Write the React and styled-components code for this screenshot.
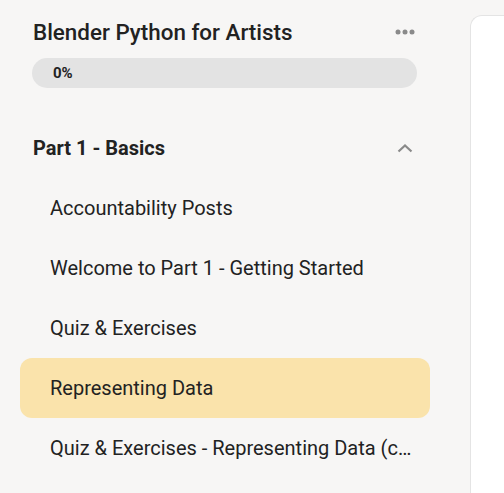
import React from "react";
import styled, { createGlobalStyle } from "styled-components";

const Global = createGlobalStyle`
  html, body { margin: 0; padding: 0; background: #f7f6f5; }
  body { font-family: Roboto, "Noto Sans", sans-serif; color: #222; }
  #root { height: 493px; overflow: hidden; }
`;

const Page = styled.div`
  display: flex;
  height: 493px;
  background: #f7f6f5;
`;

const Sidebar = styled.aside`
  width: 470px;
  flex: none;
  padding: 0 40px 0 20px;
  box-sizing: border-box;
`;

const Header = styled.div`
  display: flex;
  align-items: center;
  justify-content: space-between;
  padding: 16px 0 0 13px;
  height: 32px;
  box-sizing: content-box;
`;

const Title = styled.h1`
  margin: 0;
  font-size: 22.4px;
  font-weight: 500;
  color: #222;
`;

const IconButton = styled.button`
  border: 0;
  background: none;
  padding: 0;
  width: 24px;
  height: 24px;
  display: flex;
  align-items: center;
  justify-content: center;
  margin-right: 13px;
  cursor: pointer;
`;

const Progress = styled.div`
  margin: 10px 13px 0 12px;
  height: 30px;
  border-radius: 15px;
  background: #e3e3e3;
  display: flex;
  align-items: center;
  padding-left: 21px;
  font-size: 15px;
  font-weight: 700;
  color: #222;
`;

const Section = styled.div`
  display: flex;
  align-items: center;
  justify-content: space-between;
  margin-top: 45px;
  height: 30px;
  padding-left: 13px;
`;

const SectionTitle = styled.h2`
  margin: 0;
  font-size: 20px;
  font-weight: 700;
  color: #222;
`;

const List = styled.ul`
  list-style: none;
  margin: 15px 0 0;
  padding: 0;
`;

const Item = styled.li`
  height: 60px;
  display: flex;
  align-items: center;
  padding: 0 12px 0 30px;
  border-radius: 12px;
  background: ${(p) => (p.$active ? "#fae3ab" : "transparent")};
  font-size: 20px;
  color: #222;
  min-width: 0;
`;

const ItemText = styled.span`
  white-space: nowrap;
  overflow: hidden;
  text-overflow: ellipsis;
`;

const Main = styled.main`
  flex: 1;
  margin-top: 15px;
  background: #fff;
  border-left: 1px solid #e4e4e4;
  border-top: 1px solid #e4e4e4;
  border-top-left-radius: 12px;
`;

const Dots = () => (
  <svg width="20" height="6" viewBox="0 0 20 6">
    <circle cx="3" cy="3" r="2.5" fill="#8a8a8a" />
    <circle cx="10" cy="3" r="2.5" fill="#8a8a8a" />
    <circle cx="17" cy="3" r="2.5" fill="#8a8a8a" />
  </svg>
);

const Chevron = () => (
  <svg width="16" height="10" viewBox="0 0 16 10">
    <path d="M1.5 8.5 L8 2.5 L14.5 8.5" fill="none" stroke="#8a8a8a" strokeWidth="2.2" />
  </svg>
);

const items = [
  "Accountability Posts",
  "Welcome to Part 1 - Getting Started",
  "Quiz & Exercises",
  "Representing Data",
  "Quiz & Exercises - Representing Data (challenges)",
];

export default function App() {
  return (
    <>
      <Global />
      <Page>
        <Sidebar>
          <Header>
            <Title>Blender Python for Artists</Title>
            <IconButton aria-label="More">
              <Dots />
            </IconButton>
          </Header>
          <Progress>0%</Progress>
          <Section>
            <SectionTitle>Part 1 - Basics</SectionTitle>
            <IconButton aria-label="Collapse">
              <Chevron />
            </IconButton>
          </Section>
          <List>
            {items.map((t, i) => (
              <Item key={t} $active={i === 3}>
                <ItemText>{t}</ItemText>
              </Item>
            ))}
          </List>
        </Sidebar>
        <Main />
      </Page>
    </>
  );
}
